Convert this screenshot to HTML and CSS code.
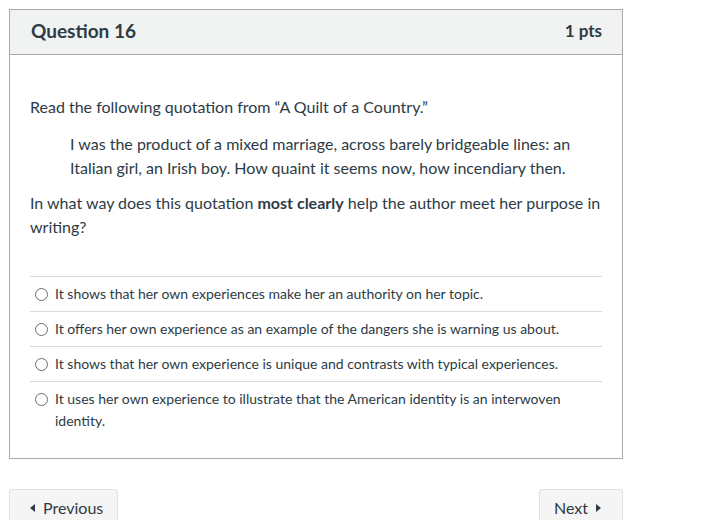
FILE: index.html
```html
<!DOCTYPE html>
<html>
<head>
<meta charset="utf-8">
<link rel="stylesheet" href="styles.css">
</head>
<body>
<div class="question">
  <div class="q-header">
    <span class="q-title">Question 16</span>
    <span class="q-pts">1 pts</span>
  </div>
  <div class="q-body">
    <p class="q-text">Read the following quotation from “A Quilt of a Country.”</p>
    <blockquote class="q-quote">I was the product of a mixed marriage, across barely bridgeable lines: an Italian girl, an Irish boy. How quaint it seems now, how incendiary then.</blockquote>
    <p class="q-text">In what way does this quotation <strong>most clearly</strong> help the author meet her purpose in writing?</p>
    <div class="answers">
      <label class="answer"><span class="radio"></span><span class="a-text">It shows that her own experiences make her an authority on her topic.</span></label>
      <label class="answer"><span class="radio"></span><span class="a-text">It offers her own experience as an example of the dangers she is warning us about.</span></label>
      <label class="answer"><span class="radio"></span><span class="a-text">It shows that her own experience is unique and contrasts with typical experiences.</span></label>
      <label class="answer"><span class="radio"></span><span class="a-text">It uses her own experience to illustrate that the American identity is an interwoven identity.</span></label>
    </div>
  </div>
</div>
<div class="nav">
  <button class="btn"><svg class="tri tri-prev" width="5" height="8" viewBox="0 0 5 8"><path d="M5 0 L0 4 L5 8 Z" fill="#2d3b45"/></svg>Previous</button>
  <button class="btn">Next<svg class="tri tri-next" width="5" height="8" viewBox="0 0 5 8"><path d="M0 0 L5 4 L0 8 Z" fill="#2d3b45"/></svg></button>
</div>
</body>
</html>
```
FILE: styles.css
```css
* { box-sizing: border-box; }
body {
  margin: 9px 0 0 9px;
  font-family: Lato, "Liberation Sans", sans-serif;
  color: #2d3b45;
  background: #fff;
}
.question {
  width: 614px;
  border: 1px solid #a8a8a8;
}
.q-header {
  height: 45px;
  display: flex;
  align-items: center;
  justify-content: space-between;
  padding: 0 20px 3px 21px;
  background: #f1f2f2;
  border-bottom: 1px solid #a8a8a8;
  font-weight: bold;
}
.q-title { font-size: 19px; }
.q-pts { font-size: 17px; }
.q-body {
  padding: 40px 20px 20px 20px;
}
.q-text {
  margin: 0;
  font-size: 16px;
  line-height: 24px;
}
.q-quote {
  margin: 13px 0 11px 40px;
  font-size: 16px;
  line-height: 24px;
}
.answers {
  margin-top: 37px;
}
.answer {
  display: flex;
  align-items: flex-start;
  border-top: 1px solid #dadada;
  padding: 6px 0;
  font-size: 14px;
  line-height: 22px;
}
.radio {
  flex: none;
  width: 13px;
  height: 13px;
  border: 1px solid #6b6b6b;
  border-radius: 50%;
  margin: 5px 7px 0 5px;
  background: #fff;
}
.nav {
  width: 614px;
  display: flex;
  justify-content: space-between;
  margin-top: 30px;
}
.btn {
  display: flex;
  align-items: center;
  font-family: Lato, "Liberation Sans", sans-serif;
  font-size: 16px;
  line-height: 24px;
  color: #2d3b45;
  background: #f5f5f5;
  border: 1px solid #dfe1e2;
  border-radius: 3px;
  padding: 6px 14px 10px 14px;
}
.tri { display: block; }
.tri-prev { margin: 0 8px 0 6px; }
.tri-next { margin: 0 7px 0 8px; }
```
